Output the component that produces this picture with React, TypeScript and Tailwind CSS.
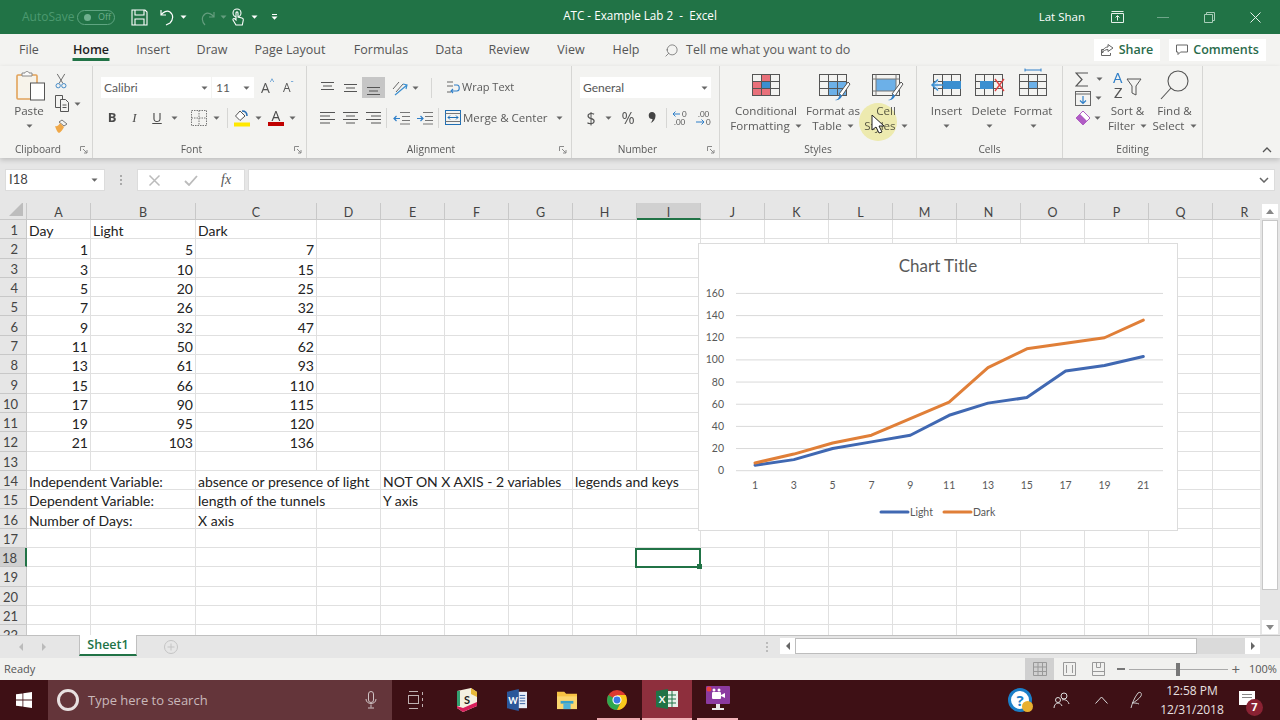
import React from "react";
import { Search } from "lucide-react";

const Caret = ({ c = "#666" }: { c?: string }) => (
  <svg width="7" height="4" viewBox="0 0 7 4" className="shrink-0"><path d="M0.5 0.5h6L3.5 3.7z" fill={c} /></svg>
);

const Launcher = () => (
  <svg width="8" height="8" viewBox="0 0 8 8" fill="none" stroke="#8a8a8a" strokeWidth="1"><path d="M0.5 5V0.5H5M3 3l4 4M7 4v3H4" /></svg>
);

const GridIcon = ({ children, w = 28, h = 22 }: { children?: React.ReactNode; w?: number; h?: number }) => (
  <svg width={w + 6} height={h + 6} viewBox={`-3 -4 ${w + 6} ${h + 6}`} fill="none" className="overflow-visible">
    {children}
  </svg>
);

const gridLines = (
  <g stroke="#555" strokeWidth="1">
    <rect x="0.5" y="0.5" width="27" height="21" />
    <path d="M0.5 7.5h27M0.5 14.5h27M9.5 0.5v21M18.5 0.5v21" />
  </g>
);

const Brush = () => (
  <g>
    <path d="M20 20l9-12 2 2-8 12z" fill="#fff" stroke="#555" strokeWidth="1" />
    <path d="M16 26c3 0 4-3 5-6l2 2c-1 2-3 5-7 4z" fill="#2f7fc8" />
  </g>
);

const SmallRow = ({ children, cn }: { children: React.ReactNode; cn: string }) => (
  <div className={`flex items-center h-[21px] ${cn}`}>{children}</div>
);

const Sep = ({ cn }: { cn: string }) => <div className={`w-px h-[20px] bg-[#d6d6d4] ${cn}`} />;

const Lines = ({ kind }: { kind: "t" | "m" | "b" | "l" | "c" | "r" }) => {
  const d: Record<string, string> = {
    t: "M3 3.5h13M5 7h9M3 10.5h13",
    m: "M3 5.5h13M5 9h9M3 12.5h13",
    b: "M3 8.5h13M5 12h9M3 15.5h13",
    l: "M2 3.5h15M2 7h10M2 10.5h15M2 14h10",
    c: "M2 3.5h15M5 7h9M2 10.5h15M5 14h9",
    r: "M2 3.5h15M7 7h10M2 10.5h15M7 14h10",
  };
  return (
    <svg width="19" height="18" viewBox="0 0 19 18" fill="none" stroke="#555" strokeWidth="1.1"><path d={d[kind]} /></svg>
  );
};

const GroupLabel = ({ text, launcher }: { text: string; launcher?: boolean }) => (
  <div className="flex items-center h-[18px] pt-[2px] text-[10.2px] text-[#595959]">
    <span className="flex-1 text-center">{text}</span>
    {launcher && <span className="flex ml-[4px] mr-[4px]"><Launcher /></span>}
  </div>
);

const Big = ({ icon, l1, l2, cn }: { icon: React.ReactNode; l1: string; l2?: string; cn: string }) => (
  <div className={`flex flex-col items-center ${cn}`}>
    <div className="h-[33px] flex items-start justify-center">{icon}</div>
    <div className="leading-[15px] text-[11.6px] text-[#5a5a5a] whitespace-nowrap">{l1}</div>
    <div className="h-[15px] leading-[15px] text-[11.6px] text-[#5a5a5a] whitespace-nowrap flex items-center gap-[5px]">
      {l2 && <span>{l2}</span>}
      <Caret />
    </div>
  </div>
);

const TitleBar = () => (
  <div className="h-[34px] bg-[#217346] flex items-center text-white relative text-[12px]">
    <span className="ml-[22px] w-[55px] text-[#4c9a70] text-[12px]">AutoSave</span>
    <div className="w-[38px] h-[15px] rounded-full border border-[#5fa581] flex items-center pl-[6px] gap-[7px] text-[9px] text-[#6fb08f]">
      <span className="w-[7px] h-[7px] rounded-full bg-[#6fb08f]" />
      <span>Off</span>
    </div>
    <div className="ml-[14px] w-[20px] flex justify-center">
      <svg width="17" height="17" viewBox="0 0 17 17" fill="none" stroke="#fff" strokeWidth="1.1"><path d="M1 1h13l2 2v13H1zM4 1v5h9V1M4 16v-6h9v6" /></svg>
    </div>
    <div className="ml-[8px] w-[20px] flex justify-center">
      <svg width="16" height="17" viewBox="0 0 16 17" fill="none" stroke="#fff" strokeWidth="1.2"><path d="M2 1v5h5M2 6c2-3 6-5 9-3 4 3 3 8 0 11l-4 2" /></svg>
    </div>
    <div className="ml-[3px] w-[8px]"><Caret c="#fff" /></div>
    <div className="ml-[10px] w-[20px] flex justify-center opacity-30">
      <svg width="16" height="17" viewBox="0 0 16 17" fill="none" stroke="#fff" strokeWidth="1.2"><path d="M14 3v5H9M14 8c-2-3-6-5-9-3-4 3-3 8 0 11" /></svg>
    </div>
    <div className="ml-[2px] w-[8px] opacity-30"><Caret c="#fff" /></div>
    <div className="ml-0 w-[20px] flex justify-center">
      <svg width="14" height="18" viewBox="0 0 14 18" fill="none" stroke="#fff" strokeWidth="1.1"><circle cx="6" cy="5" r="4" /><path d="M5 17l-3-5c-.5-1 1-2 2-1l1 1V5c0-1.500 2-1.500 2 0v4l4 1c1 .3 1.500 1 1.300 2l-1 5z" fill="#217346" /></svg>
    </div>
    <div className="ml-[3px] w-[8px]"><Caret c="#fff" /></div>
    <div className="ml-[11px] w-[8px] flex flex-col items-center gap-[1px]">
      <div className="w-[5px] h-px bg-white" />
      <Caret c="#fff" />
    </div>
    <div className="absolute left-0 right-0 top-[7px] text-center text-[11.7px] whitespace-pre pointer-events-none">ATC - Example Lab 2  -  Excel</div>
    <div className="ml-auto flex items-center">
      <span className="text-[11.5px] mr-[26px]">Lat Shan</span>
      <svg className="mr-[33px]" width="13" height="12" viewBox="0 0 13 12" fill="none" stroke="#e6f0ea" strokeWidth="1"><path d="M.5 2.500h12v9H.5zM.5.5h12M6.500 9.500V5M4.500 6.500l2-2 2 2" /></svg>
      <div className="w-[12px] h-px bg-[#6fa68a] mr-[35px]" />
      <svg className="mr-[35px]" width="11" height="11" viewBox="0 0 11 11" fill="none" stroke="#a9cdb9" strokeWidth="1"><path d="M.5 2.500h8v8h-8zM2.500 2.500v-2h8v8h-2" /></svg>
      <svg className="mr-[19px]" width="11" height="11" viewBox="0 0 11 11" fill="none" stroke="#e6f0ea" strokeWidth="1"><path d="M.5.5l10 10M10.500.5l-10 10" /></svg>
    </div>
  </div>
);

const Tab = ({ t, cn, active }: { t: string; cn: string; active?: boolean }) => (
  <div className={`relative h-full flex items-center justify-center whitespace-nowrap ${cn} ${active ? "font-semibold text-[#1f1f1f]" : "text-[#555]"}`}>
    {t}
    {active && <div className="absolute bottom-[5px] left-1/2 -translate-x-1/2 w-[37px] h-[3px] bg-[#217346]" />}
  </div>
);

const Tabs = () => (
  <div className="h-[32px] bg-[#f3f3f1] flex items-center text-[12.5px]">
    <Tab t="File" cn="w-[58px]" />
    <Tab t="Home" cn="w-[66px]" active />
    <Tab t="Insert" cn="w-[58px]" />
    <Tab t="Draw" cn="w-[60px]" />
    <Tab t="Page Layout" cn="w-[96px]" />
    <Tab t="Formulas" cn="w-[86px]" />
    <Tab t="Data" cn="w-[50px]" />
    <Tab t="Review" cn="w-[70px]" />
    <Tab t="View" cn="w-[54px]" />
    <Tab t="Help" cn="w-[56px]" />
    <div className="ml-[10px] flex items-center gap-[7px] text-[#5a5a5a]">
      <Search size={15} strokeWidth={1.2} className="-scale-x-100" color="#666" />
      <span className="text-[12.5px]">Tell me what you want to do</span>
    </div>
    <div className="ml-auto flex items-center gap-[9px] mr-[14px]">
      <div className="w-[66px] h-[22px] bg-white flex items-center justify-center gap-[5px] text-[#2a6b4b] font-semibold text-[12.5px]">
        <svg width="13" height="12" viewBox="0 0 13 12" fill="none" stroke="#666" strokeWidth="1"><path d="M7 .5l5 3.500-5 3.500V5.500C4 5.500 2.500 7 1.500 9c0-3 2-6 5.500-6zM3 5.500H.5v6h9V9" /></svg>
        Share
      </div>
      <div className="w-[97px] h-[22px] bg-white flex items-center justify-center gap-[5px] text-[#2a6b4b] font-semibold text-[12.5px]">
        <svg width="12" height="12" viewBox="0 0 12 12" fill="none" stroke="#666" strokeWidth="1"><path d="M.5 1h11v7H4.500L2 10.500V8H.5z" /></svg>
        Comments
      </div>
    </div>
  </div>
);

const Clipboard = () => (
  <div className="w-[93px] shrink-0 flex flex-col border-r border-[#d6d6d4]">
    <div className="flex flex-1">
      <div className="ml-[8px] w-[42px] flex flex-col items-center pt-[4px]">
        <div className="h-[33px] ml-[4px]">
          <svg width="30" height="32" viewBox="0 0 30 32" fill="none">
            <rect x="1" y="5" width="20" height="24" rx="1" stroke="#e2a35a" strokeWidth="1.600" fill="#f7f3ea" />
            <path d="M6 5V3h3c0-2 4-2 4 0h3v3H6z" stroke="#888" strokeWidth="1" fill="#fafafa" />
            <rect x="14.500" y="13" width="14" height="17" stroke="#555" fill="#fff" />
          </svg>
        </div>
        <div className="leading-[15px] text-[11.6px] text-[#5a5a5a]">Paste</div>
        <div className="h-[15px] flex items-center"><Caret /></div>
      </div>
      <div className="flex flex-col items-center pt-[7px] gap-[6px] w-[22px]">
        <svg width="14" height="16" viewBox="0 0 14 17" fill="none"><path d="M3 1l6 10M11 1L5 11" stroke="#666" /><circle cx="4" cy="13.500" r="2.300" stroke="#3b84c4" /><circle cx="10" cy="13.500" r="2.300" stroke="#3b84c4" /></svg>
        <div className="flex items-center gap-[4px] ml-[13px]">
          <svg width="16" height="17" viewBox="0 0 16 17" fill="none" stroke="#555"><path d="M7 12.500H1.500V.5h7V4" /><path d="M6.500 4.500h5l3 3v9h-8z" fill="#f3f3f1" /><path d="M8.500 10h4M8.500 12.500h4" /></svg>
          <Caret />
        </div>
        <svg width="17" height="16" viewBox="0 0 17 16" fill="none"><path d="M9 2l5 4-3 2-5-4z" stroke="#777" /><path d="M2 8c2 1 4-1 5-3l4 4c-1 2-3 5-5 6-2-1-3-4-4-7z" fill="#f0a848" /></svg>
      </div>
    </div>
    <GroupLabel text="Clipboard" launcher />
  </div>
);

const FontGroup = () => (
  <div className="w-[214px] shrink-0 flex flex-col border-r border-[#d6d6d4]">
    <div className="flex-1 pt-[11px] pl-[8px] flex flex-col gap-[9px]">
      <SmallRow cn="">
        <div className="w-[110px] h-[21px] bg-white flex items-center justify-between px-[3px] text-[12px] text-[#5a5a5a]" style={{ fontFamily: "Lato, sans-serif" }}>
          <span>Calibri</span><Caret />
        </div>
        <div className="w-[42px] h-[21px] ml-px bg-white flex items-center justify-between px-[4px] text-[12px] text-[#5a5a5a]" style={{ fontFamily: "Lato, sans-serif" }}>
          <span>11</span><Caret />
        </div>
        <div className="ml-[7px] w-[15px] flex items-start text-[14px] text-[#555]">A<span className="text-[8px] text-[#2f7fc8] leading-[8px]">^</span></div>
        <div className="ml-[7px] w-[15px] flex items-start text-[12px] text-[#555]">A<span className="text-[8px] text-[#2f7fc8] leading-[8px]">ˇ</span></div>
      </SmallRow>
      <SmallRow cn="text-[#555]">
        <div className="w-[22px] text-center font-bold text-[13px] text-[#4a4a4a]">B</div>
        <div className="w-[23px] text-center italic text-[13px] text-[#4a4a4a]" style={{ fontFamily: "'Liberation Serif', serif" }}>I</div>
        <div className="w-[22px] text-center underline text-[13px] text-[#4a4a4a]">U</div>
        <div className="w-[13px] flex justify-center"><Caret /></div>
        <div className="ml-[7px] w-[22px] flex justify-center">
          <svg width="16" height="16" viewBox="0 0 16 16" fill="none" stroke="#777" strokeWidth="1" strokeDasharray="1.500 1"><path d="M.5.5h15v15H.5zM.5 8h15M8 .5v15" /></svg>
        </div>
        <div className="ml-[3px] w-[8px]"><Caret /></div>
        <Sep cn="ml-[6px]" />
        <div className="ml-[3px] w-[22px] flex justify-center">
          <svg width="16" height="18" viewBox="0 0 16 18" fill="none"><path d="M6 2L1.500 7 6 11.500 11 7z" stroke="#555" fill="#fff" /><path d="M8 2c3 0 5 2 5 5" stroke="#2a6fb5" strokeWidth="1.500" /><rect y="13.500" width="16" height="4" fill="#ffe800" /></svg>
        </div>
        <div className="ml-[2px] w-[8px]"><Caret /></div>
        <div className="ml-[2px] w-[22px] flex flex-col items-center leading-[13px] text-[14px] text-[#4a4a4a]">A<div className="w-[16px] h-[4px] bg-[#c00000]" /></div>
        <div className="ml-[2px] w-[8px]"><Caret /></div>
      </SmallRow>
    </div>
    <GroupLabel text="Font" launcher />
  </div>
);

const Alignment = () => (
  <div className="w-[265px] shrink-0 flex flex-col border-r border-[#d6d6d4] text-[#5a5a5a] text-[11.500px]">
    <div className="flex-1 pt-[11px] pl-[9px] flex flex-col gap-[9px]">
      <SmallRow cn="">
        <div className="w-[23px] flex justify-center"><Lines kind="t" /></div>
        <div className="w-[23px] flex justify-center"><Lines kind="m" /></div>
        <div className="w-[23px] h-[21px] flex justify-center items-center bg-[#c6c6c6]"><Lines kind="b" /></div>
        <div className="ml-[4px] w-[22px] flex justify-center">
          <svg width="18" height="16" viewBox="0 0 18 16" fill="none"><path d="M2 9l6-7M5 12l7-8" stroke="#666" /><path d="M4 15L16 5M12 4l4 1-1 4" stroke="#3b8fd0" strokeWidth="1.200" /></svg>
        </div>
        <div className="ml-[1px]"><Caret /></div>
        <Sep cn="ml-[12px]" />
        <div className="ml-[13px] w-[16px] flex justify-center">
          <svg width="15" height="16" viewBox="0 0 15 16" fill="none"><path d="M1 2h6M1 6h6M1 12h4" stroke="#666" /><path d="M8 5h3c3 0 3 6 0 6H5M7 9l-2 2 2 2" stroke="#2f7fc8" strokeWidth="1.100" /></svg>
        </div>
        <span className="ml-[1px] text-[11px]">Wrap Text</span>
      </SmallRow>
      <SmallRow cn="">
        <div className="w-[23px] flex justify-center"><Lines kind="l" /></div>
        <div className="w-[23px] flex justify-center"><Lines kind="c" /></div>
        <div className="w-[23px] flex justify-center"><Lines kind="r" /></div>
        <Sep cn="ml-[1px]" />
        <div className="ml-[3px] w-[23px] flex justify-center">
          <svg width="17" height="14" viewBox="0 0 17 14" fill="none"><path d="M7 1.500h10M9 5.500h8M9 9.500h8M7 13h10" stroke="#777" /><path d="M7 7.500H1M3.500 5l-2.500 2.500 2.500 2.500" stroke="#2f7fc8" strokeWidth="1.200" /></svg>
        </div>
        <div className="w-[23px] flex justify-center">
          <svg width="17" height="14" viewBox="0 0 17 14" fill="none"><path d="M7 1.500h10M9 5.500h8M9 9.500h8M7 13h10" stroke="#777" /><path d="M1 7.500h6M4.500 5l2.500 2.500-2.500 2.500" stroke="#2f7fc8" strokeWidth="1.200" /></svg>
        </div>
        <Sep cn="ml-[2px]" />
        <div className="ml-[6px] w-[16px] flex justify-center">
          <svg width="16" height="15" viewBox="0 0 16 15" fill="none"><rect x=".5" y=".5" width="15" height="14" stroke="#1f6fb5" /><path d="M.5 3.500h15M.5 11.500h15" stroke="#777" /><path d="M3 7.500h10M5 5.500l-2 2 2 2M11 5.500l2 2-2 2" stroke="#1f6fb5" /></svg>
        </div>
        <span className="ml-[2px]">Merge &amp; Center</span>
        <div className="ml-[8px]"><Caret /></div>
      </SmallRow>
    </div>
    <GroupLabel text="Alignment" launcher />
  </div>
);

const NumberGroup = () => (
  <div className="w-[148px] shrink-0 flex flex-col border-r border-[#d6d6d4] text-[#555]">
    <div className="flex-1 pt-[11px] pl-[8px] flex flex-col gap-[9px]">
      <SmallRow cn="">
        <div className="w-[131px] h-[21px] bg-white flex items-center justify-between px-[3px] text-[12px]" style={{ fontFamily: "Lato, sans-serif" }}>
          <span>General</span><Caret />
        </div>
      </SmallRow>
      <SmallRow cn="">
        <div className="w-[22px] text-center text-[16px]">$</div>
        <div className="ml-[3px] w-[8px]"><Caret /></div>
        <div className="ml-[4px] w-[22px] text-center text-[16px]">%</div>
        <div className="ml-[2px] w-[22px] flex justify-center">
          <svg width="8" height="13" viewBox="0 0 8 13"><path d="M4 1a3.500 3.500 0 0 1 3.500 4c0 3-2 6-5 7 1.500-1.500 2-3 2-4A3.500 3.500 0 1 1 4 1z" fill="#444" /></svg>
        </div>
        <Sep cn="ml-[3px]" />
        <div className="ml-[3px] w-[22px] flex justify-center">
          <svg width="18" height="16" viewBox="0 0 18 16" fill="none"><path d="M8 4H1M3.500 1.500L1 4l2.500 2.500" stroke="#2f7fc8" /><text x="10" y="7" fontSize="8" fill="#555" fontFamily="Lato">0</text><text x="2" y="15" fontSize="8" fill="#555" fontFamily="Lato">.00</text></svg>
        </div>
        <div className="ml-[1px] w-[22px] flex justify-center">
          <svg width="18" height="16" viewBox="0 0 18 16" fill="none"><path d="M1 12h8M6.500 9.500L9 12l-2.500 2.500" stroke="#2f7fc8" /><text x="3" y="7" fontSize="8" fill="#555" fontFamily="Lato">.00</text><text x="11" y="15" fontSize="8" fill="#555" fontFamily="Lato">0</text></svg>
        </div>
      </SmallRow>
    </div>
    <GroupLabel text="Number" launcher />
  </div>
);

const Styles = () => (
  <div className="w-[197px] shrink-0 flex flex-col border-r border-[#d6d6d4]">
    <div className="flex-1 pt-[4px] pl-[10px] flex">
      <Big cn="w-[72px]" l1="Conditional" l2="Formatting" icon={
        <GridIcon>
          <rect x="9" y="0" width="9" height="7" fill="#e8707a" />
          <rect x="0" y="7" width="9" height="7" fill="#e8707a" />
          <rect x="9" y="7" width="9" height="7" fill="#3b8fd0" />
          <rect x="9" y="14" width="9" height="8" fill="#e8707a" />
          <rect x="0" y="14" width="9" height="8" fill="#e8707a" />
          {gridLines}
        </GridIcon>
      } />
      <Big cn="w-[62px]" l1="Format as" l2="Table" icon={
        <GridIcon>
          <rect x="9" y="7" width="19" height="15" fill="#6cb0e8" />
          {gridLines}
          <Brush />
        </GridIcon>
      } />
      <Big cn="w-[44px]" l1="Cell" l2="Styles" icon={
        <GridIcon>
          <rect x="4" y="5" width="20" height="12" fill="#6cb0e8" />
          <rect x=".5" y=".5" width="27" height="21" stroke="#555" />
          <path d="M.5 5h27M.5 17h27M4 .5v21M24 .5v21" stroke="#777" />
          <Brush />
        </GridIcon>
      } />
    </div>
    <GroupLabel text="Styles" />
  </div>
);

const Cells = () => (
  <div className="w-[146px] shrink-0 flex flex-col border-r border-[#d6d6d4]">
    <div className="flex-1 pt-[4px] pl-[8px] flex">
      <Big cn="w-[43px]" l1="Insert" icon={
        <GridIcon>
          {gridLines}
          <rect x="10" y="7" width="18" height="8" fill="#3b8fd0" />
          <path d="M12 11H0M5 5.500L-1 11l6 5.500" stroke="#3b8fd0" strokeWidth="1.500" fill="#cfe3f5" />
        </GridIcon>
      } />
      <Big cn="w-[42px]" l1="Delete" icon={
        <GridIcon>
          {gridLines}
          <rect x="5" y="7" width="13" height="8" fill="#3b8fd0" />
          <path d="M20 5l9 12M29 5l-9 12" stroke="#e04040" strokeWidth="1.300" />
        </GridIcon>
      } />
      <Big cn="w-[46px]" l1="Format" icon={
        <GridIcon>
          <rect x="9" y="7" width="10" height="8" fill="#6cb0e8" />
          {gridLines}
          <path d="M6 -4h16M6 -5.500v3M22 -5.500v3" stroke="#2f7fc8" />
        </GridIcon>
      } />
    </div>
    <GroupLabel text="Cells" />
  </div>
);

const Editing = () => (
  <div className="w-[140px] shrink-0 flex flex-col border-r border-[#d6d6d4]">
    <div className="flex-1 pt-[3px] pl-[12px] flex">
      <div className="w-[29px] flex flex-col">
        <div className="flex items-center gap-[7px] h-[20px]">
          <svg width="14" height="15" viewBox="0 0 14 15" fill="none" stroke="#555" strokeWidth="1.200"><path d="M13 1H1l6 6.500L1 14h12" /></svg>
          <Caret />
        </div>
        <div className="flex items-center gap-[4px] h-[18px]">
          <svg width="16" height="15" viewBox="0 0 16 15" fill="none"><rect x=".5" y=".5" width="15" height="14" stroke="#666" /><path d="M.5 3h15" stroke="#666" /><path d="M8 5v7M5 9.500l3 3 3-3" stroke="#2f7fc8" strokeWidth="1.200" /></svg>
          <Caret />
        </div>
        <div className="flex items-center gap-[3px] h-[18px] mt-[2px]">
          <svg width="16" height="16" viewBox="0 0 16 16" fill="none"><path d="M1 8l7-7 7 7-7 7z" stroke="#b05cc4" fill="#fff" /><path d="M1 8l4-4 7 7-4 4z" fill="#b05cc4" /></svg>
          <Caret />
        </div>
      </div>
      <div className="flex pt-[1px]">
        <Big cn="w-[47px]" l1="Sort &" l2="Filter" icon={
          <svg width="30" height="30" viewBox="0 0 30 30" fill="none">
            <text x="0" y="13" fontSize="14" fill="#2f7fc8" fontFamily="Lato">A</text>
            <text x="1" y="28" fontSize="14" fill="#555" fontFamily="Lato">Z</text>
            <path d="M14 9h14l-5 7v9l-4-2v-7z" stroke="#555" fill="#f3f3f1" />
          </svg>
        } />
        <Big cn="w-[47px]" l1="Find &" l2="Select" icon={
          <svg width="30" height="32" viewBox="0 0 30 32" fill="none" stroke="#555" strokeWidth="1.100"><circle cx="18" cy="11" r="10" /><path d="M11 18L1 29" /></svg>
        } />
      </div>
    </div>
    <GroupLabel text="Editing" />
  </div>
);

const Ribbon = () => (
  <div className="h-[92px] bg-[#f3f3f1] flex relative shadow-[0_2px_5px_rgba(0,0,0,0.18)] z-10">
    <Clipboard />
    <FontGroup />
    <Alignment />
    <NumberGroup />
    <Styles />
    <Cells />
    <Editing />
    <div className="flex-1 flex items-end justify-end pr-[8px] pb-[5px]">
      <svg width="10" height="6" viewBox="0 0 10 6" fill="none" stroke="#555" strokeWidth="1.300"><path d="M1 5l4-4 4 4" /></svg>
    </div>
    <div className="absolute left-[859px] top-[37px] w-[38px] h-[38px] rounded-full bg-[#f6f29a] opacity-70 mix-blend-multiply" />
    <svg className="absolute left-[871px] top-[48px]" width="14" height="20" viewBox="0 0 14 20"><path d="M1 1v15l4-3 3 6 3-1-3-6h5z" fill="#fff" stroke="#222" strokeWidth="1" /></svg>
  </div>
);

const FormulaBar = () => (
  <div className="h-[37px] bg-[#e6e6e6] flex items-end pb-[4px] pl-[5px] pr-[5px]">
    <div className="w-[100px] h-[22px] bg-white flex items-center justify-between px-[3px] pr-[6px] text-[13px] text-[#444] border border-[#dcdcdc]" style={{ fontFamily: "Lato, sans-serif" }}>
      <span>I18</span><Caret />
    </div>
    <div className="w-[32px] h-[22px] flex items-center justify-center">
      <div className="flex flex-col gap-[2px]"><i className="w-[2px] h-[2px] bg-[#aaa] block" /><i className="w-[2px] h-[2px] bg-[#aaa] block" /><i className="w-[2px] h-[2px] bg-[#aaa] block" /></div>
    </div>
    <div className="w-[108px] h-[22px] bg-white flex items-center border border-[#dcdcdc] pl-[10px] gap-[23px]">
      <svg width="13" height="13" viewBox="0 0 13 13" stroke="#bbb" strokeWidth="1.500"><path d="M1.500 1.500l10 10M11.500 1.500l-10 10" /></svg>
      <svg width="14" height="12" viewBox="0 0 14 12" fill="none" stroke="#bbb" strokeWidth="1.800"><path d="M1 7l4 4 8-9" /></svg>
      <span className="italic text-[14px] text-[#555] leading-none" style={{ fontFamily: "'Liberation Serif', serif" }}>fx</span>
    </div>
    <div className="ml-[3px] flex-1 h-[22px] bg-white border border-[#dcdcdc] flex items-center justify-end pr-[5px]">
      <svg width="10" height="6" viewBox="0 0 10 6" fill="none" stroke="#666" strokeWidth="1.500"><path d="M1 1l4 4 4-4" /></svg>
    </div>
  </div>
);

type Cell = { c: string; t: string; s?: number; r?: boolean };
const COLS = "ABCDEFGHIJKLMNOPQR".split("");
const tableRows: number[][] = [[1, 5, 7], [3, 10, 15], [5, 20, 25], [7, 26, 32], [9, 32, 47], [11, 50, 62], [13, 61, 93], [15, 66, 110], [17, 90, 115], [19, 95, 120], [21, 103, 136]];
const cells: Record<number, Cell[]> = {
  1: [{ c: "A", t: "Day" }, { c: "B", t: "Light" }, { c: "C", t: "Dark" }],
  14: [{ c: "A", t: "Independent Variable:", s: 2 }, { c: "C", t: "absence or presence of light", s: 2 }, { c: "E", t: "NOT ON X AXIS - 2 variables", s: 3 }, { c: "H", t: "legends and keys", s: 2 }],
  15: [{ c: "A", t: "Dependent Variable:", s: 2 }, { c: "C", t: "length of the tunnels", s: 2 }, { c: "E", t: "Y axis" }],
  16: [{ c: "A", t: "Number of Days:", s: 2 }, { c: "C", t: "X axis" }],
};
tableRows.forEach((v, i) => {
  cells[i + 2] = [{ c: "A", t: String(v[0]), r: true }, { c: "B", t: String(v[1]), r: true }, { c: "C", t: String(v[2]), r: true }];
});

const renderRow = (row: number) => {
  const out: React.ReactNode[] = [];
  const sel = row === 18;
  out.push(
    <div key={`h${row}`} className={`flex items-center justify-end pr-[8px] pt-[3px] leading-[15px] border-b border-r text-[13px] text-[#444] ${sel ? "bg-[#d0d0d0] border-r-[#217346] border-b-[#c4c4c4] border-r-2" : "bg-[#e6e6e6] border-[#c8c8c8]"}`}>{row}</div>
  );
  const list = cells[row] || [];
  for (let i = 0; i < COLS.length; i++) {
    const cell = list.find((x) => x.c === COLS[i]);
    const span = cell?.s || 1;
    const spanCls = span === 2 ? "col-span-2" : span === 3 ? "col-span-3" : "";
    out.push(
      <div key={`${COLS[i]}${row}`} className={`relative border-b border-r border-[#e0e0e0] bg-white flex items-center whitespace-nowrap text-[14px] leading-[15px] pt-[3px] text-[#222] ${spanCls} ${cell?.r ? "justify-end pr-[2px]" : "pl-[2px]"}`}>
        {cell?.t}
        {sel && COLS[i] === "I" && (
          <div className="absolute -left-[2px] top-0 -right-px -bottom-[2px] border-2 border-[#217346] z-[1]">
            <div className="absolute -right-[3px] -bottom-[3px] w-[5px] h-[5px] bg-[#217346]" />
          </div>
        )}
      </div>
    );
    i += span - 1;
  }
  return out;
};

const light = [5, 10, 20, 26, 32, 50, 61, 66, 90, 95, 103];
const dark = [7, 15, 25, 32, 47, 62, 93, 110, 115, 120, 136];
const px = (i: number) => 56 + i * 38.83;
const py = (v: number) => 226.7 - v * 1.108;
const pts = (a: number[]) => a.map((v, i) => `${px(i)},${py(v)}`).join(" ");

const Chart = () => (
  <div className="absolute left-[698px] top-[40px] w-[480px] h-[288px] bg-white border border-[#dcdcdc] z-[2]">
    <svg width="478" height="286" viewBox="0 0 478 286" style={{ fontFamily: "Lato, sans-serif" }}>
      <text x="239" y="28" textAnchor="middle" fontSize="17" fill="#595959">Chart Title</text>
      {[0, 20, 40, 60, 80, 100, 120, 140, 160].map((v) => (
        <g key={v}>
          <line x1="37" x2="464" y1={py(v)} y2={py(v)} stroke="#d9d9d9" />
          <text x="25" y={py(v) + 3.500} textAnchor="end" fontSize="10.500" fill="#595959">{v}</text>
        </g>
      ))}
      {light.map((_, i) => (
        <text key={i} x={px(i)} y="245" textAnchor="middle" fontSize="10.500" fill="#595959">{i * 2 + 1}</text>
      ))}
      <polyline points={pts(light)} fill="none" stroke="#4068b2" strokeWidth="3" strokeLinecap="round" strokeLinejoin="round" />
      <polyline points={pts(dark)} fill="none" stroke="#e07f38" strokeWidth="3" strokeLinecap="round" strokeLinejoin="round" />
      <line x1="182" x2="209" y1="268" y2="268" stroke="#4068b2" strokeWidth="3" strokeLinecap="round" />
      <text x="211" y="272" fontSize="10.500" fill="#595959">Light</text>
      <line x1="245" x2="272" y1="268" y2="268" stroke="#e07f38" strokeWidth="3" strokeLinecap="round" />
      <text x="274" y="272" fontSize="10.500" fill="#595959">Dark</text>
    </svg>
  </div>
);

const Sheet = () => (
  <div className="h-[432px] bg-[#e6e6e6] flex overflow-hidden">
    <div className="relative w-[1260px] h-[432px] overflow-hidden shrink-0" style={{ fontFamily: "Lato, sans-serif" }}>
      <div className="grid grid-cols-[27px_64px_105px_121px_repeat(14,64px)_64px] grid-rows-[17px_repeat(22,19.3px)] w-[1276px]">
        <div className="bg-[#e6e6e6] border-r border-b border-[#c8c8c8] flex items-end justify-end pr-[3px] pb-[3px]">
          <svg width="14" height="14" viewBox="0 0 14 14"><path d="M14 0v14H0z" fill="#bdbdbd" /></svg>
        </div>
        {COLS.map((c) => (
          <div key={c} className={`flex items-center justify-center pt-[4px] leading-[12px] text-[12.500px] text-[#444] border-r border-b ${c === "I" ? "bg-[#d0d0d0] border-b-2 border-b-[#217346] border-r-[#c8c8c8]" : "bg-[#e6e6e6] border-[#c8c8c8]"}`}>{c}</div>
        ))}
        {Array.from({ length: 22 }, (_, i) => renderRow(i + 1))}
      </div>
      <Chart />
    </div>
    <div className="ml-[2px] w-[16px] flex flex-col h-[431px]">
      <div className="h-[14px] mt-[1px] bg-white flex items-center justify-center"><svg width="8" height="5" viewBox="0 0 8 5"><path d="M4 0l4 5H0z" fill="#888" /></svg></div>
      <div className="flex-1 mt-[2px] bg-white border border-[#c8c8c8] mb-[30px]" />
      <div className="h-[14px] bg-white flex items-center justify-center"><svg width="8" height="5" viewBox="0 0 8 5"><path d="M4 5l4-5H0z" fill="#888" /></svg></div>
    </div>
  </div>
);

const SheetBar = () => (
  <div className="h-[23px] bg-[#e6e6e6] border-t border-[#c0c0c0] flex text-[#999] relative">
    <div className="w-[79px] flex items-center pl-[19px] gap-[19px] h-full">
      <svg width="4" height="8" viewBox="0 0 4 8"><path d="M4 0v8L0 4z" fill="#bbb" /></svg>
      <svg width="4" height="8" viewBox="0 0 4 8"><path d="M0 0v8l4-4z" fill="#bbb" /></svg>
    </div>
    <div className="w-[58px] h-[21px] -mt-px pt-[2px] bg-white border-x border-b-2 border-x-[#c0c0c0] border-b-[#217346] text-[#217346] font-semibold text-[12.500px] flex items-center justify-center">Sheet1</div>
    <div className="ml-[27px] h-full flex items-center">
      <svg width="14" height="14" viewBox="0 0 14 14" fill="none" stroke="#c4c4c4"><circle cx="7" cy="7" r="6.500" /><path d="M3.500 7h7M7 3.500v7" /></svg>
    </div>
    <div className="ml-[588px] h-full flex items-center">
      <div className="flex flex-col gap-[2px]"><i className="w-[2px] h-[2px] bg-[#bbb] block" /><i className="w-[2px] h-[2px] bg-[#bbb] block" /><i className="w-[2px] h-[2px] bg-[#bbb] block" /></div>
    </div>
    <div className="ml-[12px] h-[16px] mt-[2px] w-[480px] flex bg-[#dadada]">
      <div className="w-[15px] bg-white flex items-center justify-center"><svg width="4" height="8" viewBox="0 0 4 8"><path d="M4 0v8L0 4z" fill="#666" /></svg></div>
      <div className="w-[402px] bg-white border border-[#bdbdbd]" />
      <div className="flex-1" />
      <div className="w-[15px] bg-white flex items-center justify-center"><svg width="4" height="8" viewBox="0 0 4 8"><path d="M0 0v8l4-4z" fill="#666" /></svg></div>
    </div>
  </div>
);

const StatusBar = () => (
  <div className="h-[22px] bg-[#f1f1ef] flex items-center text-[11px] text-[#555] pl-[4px]">
    <span>Ready</span>
    <div className="ml-auto flex items-center h-full">
      <div className="w-[29px] h-full bg-[#d0d0d0] flex items-center justify-center">
        <svg width="14" height="14" viewBox="0 0 14 14" fill="none" stroke="#999"><path d="M.5.5h13v13H.5zM5 .5v13M9.500.5v13M.5 5h13M.5 9.500h13" /></svg>
      </div>
      <div className="w-[30px] flex justify-center">
        <svg width="13" height="14" viewBox="0 0 13 14" fill="none" stroke="#999"><path d="M.5.5h12v13H.5zM3.500 3v8M9.500 3v8" /></svg>
      </div>
      <div className="w-[29px] flex justify-center">
        <svg width="13" height="14" viewBox="0 0 13 14" fill="none" stroke="#999"><path d="M.5.5h12v13H.5zM.5 9.500h12M4.500.5v5h4v-5" /></svg>
      </div>
      <div className="ml-[4px] w-[8px] h-[1.500px] bg-[#777]" />
      <div className="ml-[4px] w-[99px] h-px bg-[#aaa] relative">
        <div className="absolute left-[47px] -top-[6px] w-[4px] h-[13px] bg-[#777]" />
      </div>
      <span className="ml-[3px] text-[15px] leading-none text-[#666]">+</span>
      <span className="ml-[9px] mr-[5px] w-[26px] text-[11px]">100%</span>
    </div>
  </div>
);

const Taskbar = () => (
  <div className="h-[40px] bg-[#3e1015] flex items-center text-white relative">
    <div className="w-[48px] flex justify-center">
      <svg width="16" height="16" viewBox="0 0 16 16" fill="#fff"><path d="M0 2.300l6.500-.9v6.200H0zM7.300 1.300L16 0v7.600H7.300zM0 8.400h6.500v6.200L0 13.700zM7.300 8.400H16V16l-8.700-1.200z" /></svg>
    </div>
    <div className="w-[344px] h-full bg-[#64353a] flex items-center text-[#c9b8ba]">
      <div className="ml-[9px] w-[22px] h-[22px] rounded-full border-[3px] border-[#e8e0e0]" />
      <span className="ml-[9px] pt-[2px] text-[13px]">Type here to search</span>
      <div className="ml-auto mr-[15px]">
        <svg width="12" height="18" viewBox="0 0 12 18" fill="none" stroke="#cfc2c3"><rect x="3.500" y=".5" width="5" height="11" rx="2.500" /><path d="M1 8c0 6 10 6 10 0M6 13.500v3M3 17h6" /></svg>
      </div>
    </div>
    <div className="ml-[14px] w-[20px] flex justify-center">
      <svg width="16" height="18" viewBox="0 0 16 18" fill="none" stroke="#bfb0b1"><path d="M1 .5h9M1 17.500h9" /><rect x=".5" y="4.500" width="10" height="8" /><path d="M14.500 1v3M14.500 7v3M14.500 13v3" /></svg>
    </div>
    <div className="ml-[31px] w-[20px] flex justify-center">
      <svg width="20" height="24" viewBox="0 0 20 24"><path d="M0 3l14-3 6 4v14l-14 6-6-4z" fill="#f4f0e0" /><path d="M0 18l6 2 14-6v4l-14 6-6-4z" fill="#d81e5b" /><path d="M14 0l6 4v5l-6-3z" fill="#e8b838" /><path d="M0 3l3 0v15l-3 0z" fill="#33a070" /><text x="10" y="16" textAnchor="middle" fontSize="11" fontWeight="700" fill="#222" fontFamily="Lato">S</text></svg>
    </div>
    <div className="ml-[30px] w-[20px] flex justify-center">
      <svg width="22" height="24" viewBox="0 0 22 24"><rect x="9" y="3" width="13" height="18" fill="#e8eef8" /><path d="M14 7h6M14 10h6M14 13h6M14 16h6" stroke="#2b579a" /><path d="M0 3l13-3v24L0 21z" fill="#2b579a" /><text x="6.500" y="16" textAnchor="middle" fontSize="10" fontWeight="700" fill="#fff" fontFamily="Lato">W</text></svg>
    </div>
    <div className="ml-[30px] w-[20px] flex justify-center">
      <svg width="22" height="20" viewBox="0 0 22 20"><path d="M0 1h8l2 2h12v17H0z" fill="#f6c244" /><rect y="6" width="22" height="14" fill="#fbd66e" /><path d="M7 14h8v6H7z" fill="#4fb3d9" /><rect x="4" y="11" width="14" height="3" fill="#37a2cc" /></svg>
    </div>
    <div className="ml-[30px] w-[20px] flex justify-center">
      <svg width="22" height="22" viewBox="0 0 22 22">
        <circle cx="11" cy="11" r="11" fill="#dd3a30" />
        <path d="M11 11L1.500 5.500A11 11 0 0 0 11 22l4-8z" fill="#2fa84f" />
        <path d="M11 11l4 3-4 8A11 11 0 0 0 20.500 5.500H11z" fill="#f8c91c" />
        <circle cx="11" cy="11" r="5" fill="#fff" />
        <circle cx="11" cy="11" r="3.800" fill="#3b78e7" />
      </svg>
    </div>
    <div className="absolute left-[597px] bottom-0 w-[43px] h-[2px] bg-[#eba8ae]" />
    <div className="ml-[15px] w-[50px] h-full bg-[#8e2f3d] flex items-center justify-center relative border-b-2 border-[#f3b3b8]">
      <svg width="22" height="20" viewBox="0 0 22 20"><rect x="10" y="2" width="12" height="16" fill="#e8f0ea" /><path d="M12 6h8M12 10h8M12 14h8M16 2v16" stroke="#217346" /><path d="M0 2l12-2v20L0 18z" fill="#217346" /><text x="6" y="14" textAnchor="middle" fontSize="10" fontWeight="700" fill="#fff" fontFamily="Lato">X</text></svg>
    </div>
    <div className="ml-[5px] w-[41px] h-full flex items-center justify-center border-b-2 border-[#f3b3b8]">
      <svg width="24" height="26" viewBox="0 0 24 26"><rect width="24" height="18" rx="1" fill="#8b3aa0" /><circle cx="3" cy="3" r="2.500" fill="#e84040" /><rect x="6" y="6" width="9" height="7" rx="1" fill="#fff" /><path d="M15 9l4-2v5l-4-2z" fill="#fff" /><circle cx="8" cy="4" r="1.500" fill="#fff" /><circle cx="13" cy="4" r="1.500" fill="#fff" /><rect x="10" y="18" width="4" height="4" fill="#e8e8e8" /><rect x="6" y="22" width="12" height="2" fill="#e8e8e8" /></svg>
    </div>
    <div className="ml-auto flex items-center h-full">
      <div className="relative w-[24px] h-[24px] rounded-full bg-white border-[3px] border-[#1b7fc8] flex items-center justify-center text-[#1b7fc8] font-bold text-[15px] mr-[21px]">
        ?
        <div className="absolute -right-[4px] -bottom-[3px] w-[11px] h-[11px] rounded-full bg-[#e8b030]" />
      </div>
      <svg className="mr-[25px]" width="17" height="17" viewBox="0 0 17 17" fill="none" stroke="#ddd"><circle cx="11" cy="4" r="3" /><circle cx="5" cy="8" r="2.500" /><path d="M1 16c0-3 2-5 4-5s3 1 4 3M9 8c2-1 6 0 7 4" /></svg>
      <svg className="mr-[22px]" width="13" height="8" viewBox="0 0 13 8" fill="none" stroke="#ddd"><path d="M.5 7.500l6-6.500 6 6.500" /></svg>
      <svg className="mr-[11px]" width="14" height="18" viewBox="0 0 14 18" fill="none" stroke="#ccc"><path d="M1 17c1-4 3-10 7-15 3-2 4 1 3 3-2 3-6 6-9 7 3 0 5 0 7 1" /></svg>
      <div className="w-[74px] flex flex-col items-center text-[12px] leading-[19px] text-[#e8e0e0] mr-[10px]">
        <span>12:58 PM</span>
        <span>12/31/2018</span>
      </div>
      <div className="relative w-[16px] h-[14px] bg-white mr-[25px] -mt-[4px]">
        <div className="absolute left-[3px] top-[3px] w-[10px] h-px bg-[#888]" />
        <div className="absolute left-[3px] top-[6px] w-[10px] h-px bg-[#888]" />
        <div className="absolute -right-[8px] -bottom-[11px] w-[17px] h-[17px] rounded-full bg-[#8a2233] text-[11px] font-bold flex items-center justify-center">7</div>
      </div>
    </div>
  </div>
);

export default function App() {
  return (
    <div className="w-[1280px] h-[720px] overflow-hidden flex flex-col bg-white" style={{ fontFamily: "'Open Sans', sans-serif" }}>
      <TitleBar />
      <Tabs />
      <Ribbon />
      <FormulaBar />
      <div className="h-[8px] bg-[#e6e6e6]" />
      <Sheet />
      <SheetBar />
      <StatusBar />
      <Taskbar />
    </div>
  );
}
